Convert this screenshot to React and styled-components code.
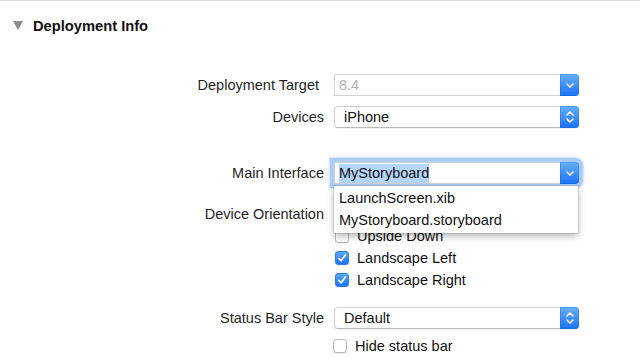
import React from 'react';
import styled, { createGlobalStyle } from 'styled-components';

const GlobalStyle = createGlobalStyle`
  html, body {
    margin: 0;
    padding: 0;
    background: #ffffff;
  }
  body {
    font-family: "Liberation Sans", Arial, sans-serif;
    font-size: 14.5px;
    color: #1f1f1f;
    -webkit-font-smoothing: antialiased;
  }
`;

const ChevronDown = () => (
  <svg width="10" height="7" viewBox="0 0 10 7">
    <path d="M2 2 L5 5 L8 2" fill="none" stroke="#fff" strokeWidth="1.6" strokeLinecap="round" strokeLinejoin="round" />
  </svg>
);

const Stepper = () => (
  <svg width="10" height="14" viewBox="0 0 10 14">
    <path d="M2 5 L5 2 L8 5" fill="none" stroke="#fff" strokeWidth="1.6" strokeLinecap="round" strokeLinejoin="round" />
    <path d="M2 9 L5 12 L8 9" fill="none" stroke="#fff" strokeWidth="1.6" strokeLinecap="round" strokeLinejoin="round" />
  </svg>
);

const Check = () => (
  <svg width="10" height="10" viewBox="0 0 10 10">
    <path d="M1.8 5.4 L4 7.8 L8.4 2" fill="none" stroke="#fff" strokeWidth="1.7" strokeLinecap="round" strokeLinejoin="round" />
  </svg>
);

const Triangle = () => (
  <svg width="10" height="9" viewBox="0 0 10 9">
    <path d="M0 0 H10 L5 9 Z" fill="#8c8c8c" />
  </svg>
);

function Popup({ value, kind, disabled, focused, menu }) {
  return (
    <FieldWrap>
      <Field kind={kind} focused={focused}>
        <FieldText kind={kind} disabled={disabled}>
          {focused ? <Selected>{value}</Selected> : value}
        </FieldText>
        <BlueButton kind={kind}>
          {kind === 'combo' ? <ChevronDown /> : <Stepper />}
        </BlueButton>
      </Field>
      {menu && (
        <Menu>
          {menu.map((item) => (
            <MenuItem key={item}>{item}</MenuItem>
          ))}
        </Menu>
      )}
    </FieldWrap>
  );
}

function CheckBox({ label, checked, inset }) {
  return (
    <CheckRow inset={inset}>
      <Box checked={checked}>{checked && <Check />}</Box>
      <span>{label}</span>
    </CheckRow>
  );
}

export default function App() {
  return (
    <>
      <GlobalStyle />
      <Page>
        <Header>
          <Triangle />
          <Title>Deployment Info</Title>
        </Header>

        <Row top={24}>
          <Label nudge={5}>Deployment Target</Label>
          <Popup value="8.4" kind="combo" disabled />
        </Row>
        <Row top={10}>
          <Label>Devices</Label>
          <Popup value="iPhone" kind="popup" />
        </Row>

        <Row top={34} front>
          <Label>Main Interface</Label>
          <Popup
            value="MyStoryboard"
            kind="combo"
            focused
            menu={['LaunchScreen.xib', 'MyStoryboard.storyboard']}
          />
        </Row>

        <Row top={19} alignTop>
          <Label>Device Orientation</Label>
          <CheckList>
            {/* Portrait sits under the open menu */}
            <HiddenRow />
            <CheckBox label="Upside Down" inset={1} />
            <CheckBox label="Landscape Left" checked inset={1} />
            <CheckBox label="Landscape Right" checked inset={1} />
          </CheckList>
        </Row>

        <Row top={16}>
          <Label>Status Bar Style</Label>
          <Popup value="Default" kind="popup" />
        </Row>
        <Row top={6}>
          <span />
          <CheckBox label="Hide status bar" inset={-1} />
        </Row>
      </Page>
    </>
  );
}

const Page = styled.div`
  width: 640px;
  height: 359px;
  overflow: hidden;
  border-top: 1px solid #d9d9d9;
  box-sizing: border-box;
`;

const Header = styled.div`
  height: 49px;
  display: flex;
  align-items: center;
  padding-left: 13px;
  gap: 10px;
`;

const Title = styled.div`
  font-weight: bold;
  font-size: 14.7px;
  color: #111;
`;

const Row = styled.div`
  display: grid;
  grid-template-columns: 324px 245px;
  column-gap: 10px;
  align-items: ${(p) => (p.alignTop ? 'start' : 'center')};
  margin-top: ${(p) => p.top}px;
  position: relative;
  z-index: ${(p) => (p.front ? 2 : 1)};
`;

const Label = styled.div`
  text-align: right;
  line-height: 22px;
  white-space: nowrap;
  padding-right: ${(p) => p.nudge || 0}px;
  color: #1f1f1f;
`;

const FieldWrap = styled.div`
  position: relative;
  width: 245px;
`;

const Field = styled.div`
  height: 22px;
  display: flex;
  align-items: stretch;
  box-sizing: border-box;
  background: #fff;
  border: 1px solid ${(p) => (p.kind === 'combo' ? '#d2d2d2' : '#d0d0d0')};
  border-bottom-color: ${(p) => (p.kind === 'combo' ? '#d2d2d2' : '#b9b9b9')};
  border-radius: ${(p) => (p.kind === 'combo' ? '0 4px 4px 0' : '4px')};
  box-shadow: ${(p) =>
    p.focused
      ? '0 0 0 4px #a9cdf7, 0 0 2px 5px rgba(150, 190, 240, 0.5)'
      : p.kind === 'popup'
      ? '0 1px 1px rgba(0, 0, 0, 0.05)'
      : 'none'};
`;

const FieldText = styled.div`
  flex: 1;
  display: flex;
  align-items: center;
  padding-left: ${(p) => (p.kind === 'combo' ? 4 : 9)}px;
  color: ${(p) => (p.disabled ? '#b3b3b3' : '#111')};
  white-space: nowrap;
  overflow: hidden;
`;

const Selected = styled.span`
  background: #b4d5fe;
  line-height: 19px;
`;

const BlueButton = styled.div`
  width: 19px;
  margin: -1px -1px -1px 0;
  display: flex;
  align-items: center;
  justify-content: center;
  background: linear-gradient(#68b0fb, #1a72f2);
  border-radius: 0 4px 4px 0;
  box-shadow: inset 0 0 0 1px rgba(20, 90, 210, 0.25);
`;

const Menu = styled.div`
  position: absolute;
  top: 24px;
  left: 0;
  width: 244px;
  padding: 1px 0 2px;
  background: #fff;
  box-shadow: 0 0 0 1px rgba(0, 0, 0, 0.08), 0 3px 7px rgba(0, 0, 0, 0.3);
`;

const MenuItem = styled.div`
  height: 22px;
  line-height: 22px;
  padding-left: 5px;
  color: #111;
  white-space: nowrap;
`;

const CheckList = styled.div`
  display: flex;
  flex-direction: column;
`;

const HiddenRow = styled.div`
  height: 22px;
`;

const CheckRow = styled.div`
  height: 22px;
  display: flex;
  align-items: center;
  gap: 8px;
  margin-left: ${(p) => p.inset || 0}px;
  color: #111;
  white-space: nowrap;
`;

const Box = styled.div`
  width: 14px;
  height: 14px;
  box-sizing: border-box;
  border-radius: 3px;
  display: flex;
  align-items: center;
  justify-content: center;
  background: ${(p) => (p.checked ? 'linear-gradient(#5aa9fa, #1b73f0)' : '#fff')};
  border: 1px solid ${(p) => (p.checked ? '#2f7fe8' : '#b8b8b8')};
  box-shadow: 0 1px 1px rgba(0, 0, 0, 0.06);
`;
